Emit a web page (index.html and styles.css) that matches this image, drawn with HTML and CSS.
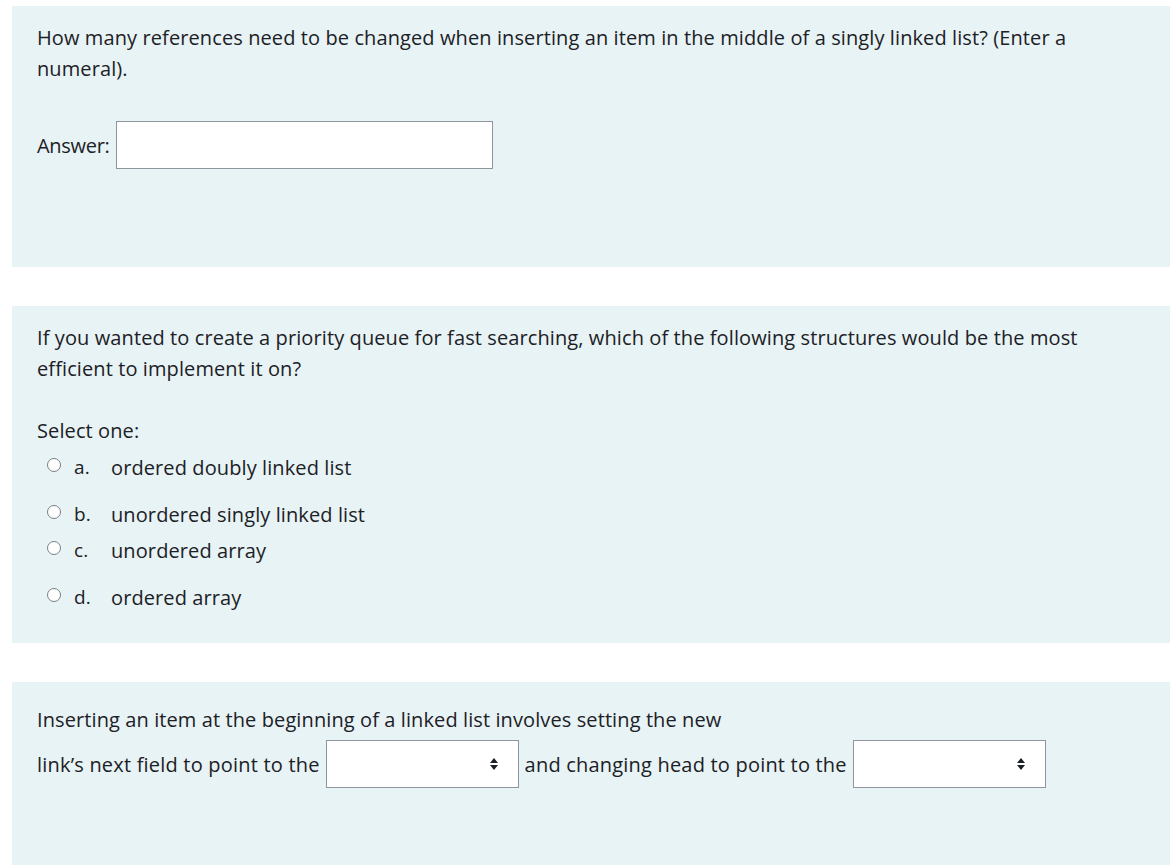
FILE: index.html
```html
<!DOCTYPE html>
<html lang="en">
<head>
<meta charset="utf-8">
<title>Quiz</title>
<link rel="stylesheet" href="styles.css">
</head>
<body>
<div class="page">
  <section class="que que-short">
    <div class="qtext">How many references need to be changed when inserting an item in the middle of a singly linked list? (Enter a numeral).</div>
    <div class="answer-row">
      <label class="answer-label" for="ans1">Answer:</label>
      <input class="text-input" id="ans1" type="text">
    </div>
  </section>

  <section class="que que-multi">
    <div class="qtext">If you wanted to create a priority queue for fast searching, which of the following structures would be the most efficient to implement it on?</div>
    <div class="prompt">Select one:</div>
    <div class="options">
      <div class="option"><span class="radio"></span><span class="letter">a.</span><span class="opt-text">ordered doubly linked list</span></div>
      <div class="option"><span class="radio"></span><span class="letter">b.</span><span class="opt-text">unordered singly linked list</span></div>
      <div class="option"><span class="radio"></span><span class="letter">c.</span><span class="opt-text">unordered array</span></div>
      <div class="option"><span class="radio"></span><span class="letter">d.</span><span class="opt-text">ordered array</span></div>
    </div>
  </section>

  <section class="que que-gap">
    <div class="gap-line1">Inserting an item at the beginning of a linked list involves setting the new</div>
    <div class="gap-line2">
      <span>link’s next field to point to the</span>
      <span class="select"><svg class="updown" viewBox="0 0 8 12" width="8" height="12"><path d="M4 0 L8 5 L0 5 Z M0 7 L8 7 L4 12 Z" fill="#1d2125"/></svg></span>
      <span>and changing head to point to the</span>
      <span class="select"><svg class="updown" viewBox="0 0 8 12" width="8" height="12"><path d="M4 0 L8 5 L0 5 Z M0 7 L8 7 L4 12 Z" fill="#1d2125"/></svg></span>
    </div>
  </section>
</div>
</body>
</html>
```

FILE: styles.css
```css
html, body {
  margin: 0;
  padding: 0;
  background: #ffffff;
}

body {
  font-family: "Open Sans", "Noto Sans", sans-serif;
  font-size: 20px;
  letter-spacing: 0.1px;
  color: #1d2125;
}

.page {
  display: flex;
  flex-direction: column;
  gap: 39px;
  padding: 6px 5px 0 12px;
}

.que {
  background: #e7f3f5;
  padding: 16px 25px;
}

.qtext {
  line-height: 31px;
}

.answer-row {
  display: flex;
  align-items: center;
  gap: 6px;
  margin-top: 37px;
  margin-bottom: 82px;
}

.answer-label {
  letter-spacing: -0.3px;
}

.text-input {
  box-sizing: border-box;
  width: 377px;
  height: 48px;
  border: 1px solid #8f959e;
  background: #ffffff;
  margin: 0;
  padding: 0 10px;
  font: inherit;
}

.prompt {
  margin-top: 31px;
  line-height: 31px;
}

.options {
  margin-top: 3px;
  padding-bottom: 12px;
}

.option {
  display: flex;
  align-items: center;
  height: 36px;
  padding-left: 10px;
}

.option:nth-child(odd) {
  margin-bottom: 11px;
}

.radio {
  box-sizing: border-box;
  width: 14px;
  height: 14px;
  border: 1px solid #7b7f84;
  border-radius: 50%;
  background: #ffffff;
  margin-right: 13px;
  margin-top: -4px;
  flex: none;
}

.letter {
  width: 37px;
  flex: none;
  font-size: 19px;
}

.que-gap {
  padding-top: 22px;
  padding-bottom: 80px;
}

.gap-line1 {
  line-height: 31px;
}

.gap-line2 {
  display: flex;
  align-items: center;
  gap: 6px;
  margin-top: 5px;
  letter-spacing: 0.2px;
}

.select {
  box-sizing: border-box;
  width: 193px;
  height: 48px;
  border: 1px solid #8f959e;
  background: #ffffff;
  display: flex;
  align-items: center;
  justify-content: flex-end;
  padding-right: 20px;
}

.updown {
  display: block;
}
```
